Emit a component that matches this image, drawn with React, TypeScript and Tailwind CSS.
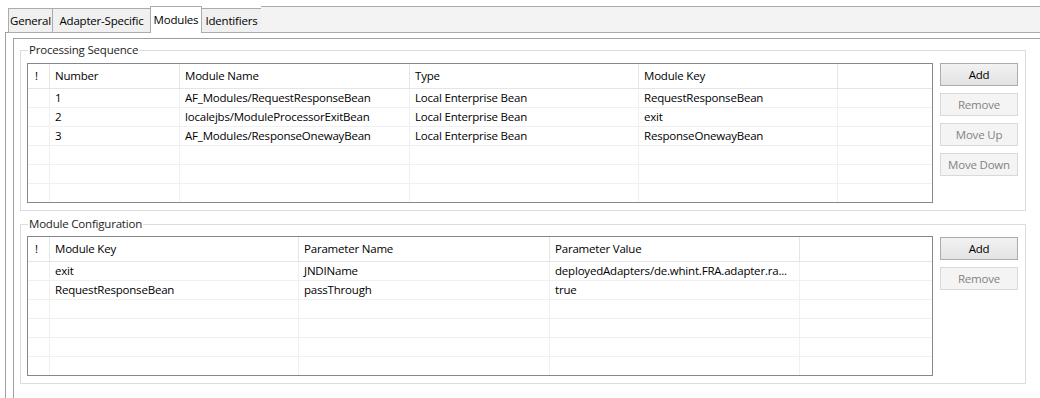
import React from "react";

type Col = { label: string; w: string };

const seqCols: Col[] = [
  { label: "!", w: "w-[22px]" },
  { label: "Number", w: "w-[130px]" },
  { label: "Module Name", w: "w-[230px]" },
  { label: "Type", w: "w-[229px]" },
  { label: "Module Key", w: "w-[199px]" },
];

const seqRows: string[][] = [
  ["", "1", "AF_Modules/RequestResponseBean", "Local Enterprise Bean", "RequestResponseBean"],
  ["", "2", "localejbs/ModuleProcessorExitBean", "Local Enterprise Bean", "exit"],
  ["", "3", "AF_Modules/ResponseOnewayBean", "Local Enterprise Bean", "ResponseOnewayBean"],
  ["", "", "", "", ""],
  ["", "", "", "", ""],
  ["", "", "", "", ""],
];

const confCols: Col[] = [
  { label: "!", w: "w-[22px]" },
  { label: "Module Key", w: "w-[249px]" },
  { label: "Parameter Name", w: "w-[251px]" },
  { label: "Parameter Value", w: "w-[250px]" },
];

const confRows: string[][] = [
  ["", "exit", "JNDIName", "deployedAdapters/de.whint.FRA.adapter.ra..."],
  ["", "RequestResponseBean", "passThrough", "true"],
  ["", "", "", ""],
  ["", "", "", ""],
  ["", "", "", ""],
  ["", "", "", ""],
];

const tabs = ["General", "Adapter-Specific", "Modules", "Identifiers"];
const tabWidths = ["w-[45px]", "w-[99px]", "w-[52px]", "w-[61px]"];

function Table({ cols, rows }: { cols: Col[]; rows: string[][] }) {
  return (
    <div className="w-[906px] h-[140px] border border-[#828790] bg-white overflow-hidden">
      <div className="flex h-[25px] border-b border-[#e5e5e5]">
        {cols.map((c, i) => (
          <div
            key={i}
            className={`${c.w} shrink-0 border-r border-[#e5e5e5] flex items-center ${i === 0 ? "pl-[7px]" : "pl-[5px]"}`}
          >
            {c.label}
          </div>
        ))}
        <div className="flex-1" />
      </div>
      {rows.map((r, ri) => (
        <div key={ri} className="flex h-[19px] border-b border-[#f0f0f0]">
          {r.map((cell, ci) => (
            <div
              key={ci}
              className={`${cols[ci].w} shrink-0 border-r border-[#f0f0f0] flex items-center pl-[5px] whitespace-nowrap overflow-hidden`}
            >
              {cell}
            </div>
          ))}
          <div className="flex-1" />
        </div>
      ))}
    </div>
  );
}

function Btn({ label, disabled }: { label: string; disabled?: boolean }) {
  return (
    <button
      className={
        disabled
          ? "w-[78px] h-[23px] border border-[#d9d9d9] bg-[#f4f4f4] text-[#838383] flex items-center justify-center"
          : "w-[78px] h-[23px] border border-[#acacac] bg-gradient-to-b from-[#f2f2f2] to-[#e3e3e3] text-black flex items-center justify-center"
      }
    >
      {label}
    </button>
  );
}

function Group({
  title,
  children,
  buttons,
  pt,
}: {
  title: string;
  children: React.ReactNode;
  buttons: React.ReactNode;
  pt: string;
}) {
  return (
    <fieldset className={`w-[1006px] border border-[#dcdcdc] px-[6px] pb-[7px] ${pt}`}>
      <legend className="ml-[1px] px-[1px] leading-[16px] text-[#1e1e1e]">{title}</legend>
      <div className="flex gap-[7px]">
        {children}
        <div className="flex flex-col gap-[7px]">{buttons}</div>
      </div>
    </fieldset>
  );
}

export default function App() {
  return (
    <div className="w-[1040px] h-[398px] bg-white overflow-hidden text-[11.5px] tracking-[-0.2px] text-black font-['Open_Sans','Noto_Sans',sans-serif] pt-[6px]">
      {/* tab strip */}
      <div className="flex h-[27px] ml-[5px]">
        <div className="w-[3px] border-b border-[#a0a0a0]" />
        {tabs.map((t, i) =>
          t === "Modules" ? (
            <div
              key={t}
              className={`${tabWidths[i]} h-[27px] -ml-px border-t border-l border-r border-[#acacac] bg-white flex items-center justify-center whitespace-nowrap`}
            >
              {t}
            </div>
          ) : (
            <div key={t} className={`flex flex-col ${i === 0 ? "" : "-ml-px"}`}>
              <div className="h-[2px]" />
              <div
                className={`${tabWidths[i]} h-[25px] border border-[#acacac] bg-[#f0f0f0] flex items-center justify-center whitespace-nowrap`}
              >
                {t}
              </div>
            </div>
          )
        )}
        <div className="flex-1 border-t border-b border-[#acacac] bg-[#f3f3f3] -ml-px" />
      </div>
      {/* tab body */}
      <div className="ml-[5px] h-[400px] border-l border-[#a0a0a0] pl-[7px] pt-[5px]">
        <div className="h-full border-l border-t border-[#a0a0a0] pl-[6px] pt-[3px]">
          <Group
            title="Processing Sequence"
            pt="pt-[5px]"
            buttons={
              <>
                <Btn label="Add" />
                <Btn label="Remove" disabled />
                <Btn label="Move Up" disabled />
                <Btn label="Move Down" disabled />
              </>
            }
          >
            <Table cols={seqCols} rows={seqRows} />
          </Group>
          <div className="h-[5px]" />
          <Group
            title="Module Configuration"
            pt="pt-[4px]"
            buttons={
              <>
                <div className="h-px -mb-[7px]" />
                <Btn label="Add" />
                <Btn label="Remove" disabled />
              </>
            }
          >
            <Table cols={confCols} rows={confRows} />
          </Group>
        </div>
      </div>
    </div>
  );
}
